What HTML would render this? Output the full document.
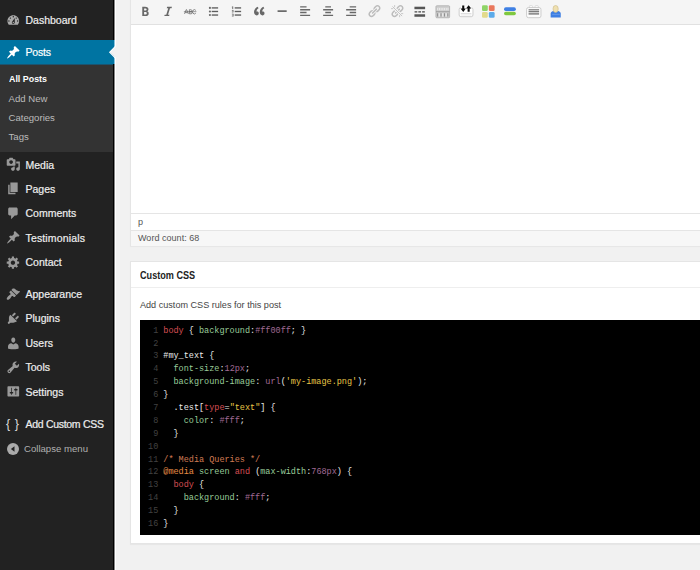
<!DOCTYPE html>
<html>
<head>
<meta charset="utf-8">
<title>Edit Post</title>
<style>
*{box-sizing:border-box;margin:0;padding:0}
html,body{width:700px;height:570px;overflow:hidden;background:#f1f1f1;font-family:"Liberation Sans",sans-serif;}
#wrap{position:relative;width:700px;height:570px;overflow:hidden}
/* sidebar */
#side{position:absolute;left:0;top:0;width:114px;height:570px;background:linear-gradient(to right,#222 0,#222 113px,#000 113px,#000 114px)}
#edge{position:absolute;left:114px;top:0;width:2px;height:570px;background:linear-gradient(to right,#858585 0,#858585 1px,#fff 1px,#fff 2px)}
#edge2{position:absolute;left:113px;top:40px;width:2px;height:24px;background:linear-gradient(to right,#0074a2 0,#0074a2 1px,#86c2dc 1px,#86c2dc 2px)}
.mi{position:absolute;left:0;width:114px;height:24px}
.mi svg{position:absolute;left:5.7px;top:4.7px;width:14.6px;height:14.6px;fill:#999}
.mi span{position:absolute;left:25.5px;top:0;line-height:24px;font-size:10.5px;color:#eee;white-space:nowrap;-webkit-text-stroke:0.2px #eee}
.mi.cur{background:#0074a2}
.mi.cur svg{fill:#fff}
.mi.cur span{color:#fff;-webkit-text-stroke:0.2px #fff}
#sub{position:absolute;left:0;top:64px;width:113px;height:88px;background:#333;border-top:1px solid #1a5470}
#sub span{position:absolute;left:8.5px;font-size:9.6px;color:#bbb;line-height:12px;white-space:nowrap}
#sub span.b{color:#fff;font-weight:bold}
/* editor */
#ed{position:absolute;left:130px;top:-1px;width:600px;height:247px;background:#fff;border:1px solid #e5e5e5;box-shadow:0 1px 1px rgba(0,0,0,.04)}
#tb{position:absolute;left:0;top:0;width:100%;height:25px;background:#f5f5f5;border-bottom:1px solid #e1e1e1}
#tb svg{position:absolute}
#path{position:absolute;left:0;top:213px;width:100%;height:18px;border-top:1px solid #e5e5e5;background:#fff;font-size:9px;color:#555;line-height:17px;padding-left:7px}
#wc{position:absolute;left:0;top:230px;width:100%;height:16px;border-top:1px solid #e5e5e5;background:#f7f7f7;font-size:9px;color:#555;line-height:15.4px;padding-left:7px;letter-spacing:0.03px}
/* postbox */
#pb{position:absolute;left:130px;top:261px;width:600px;height:283px;background:#fff;border:1px solid #e5e5e5;box-shadow:0 1px 1px rgba(0,0,0,.04)}
#pb h3{position:absolute;left:0;top:0;width:100%;height:26px;border-bottom:1px solid #eee;font-size:10px;font-weight:bold;color:#222;line-height:28px;padding-left:8.5px}
#pb h3 span{display:inline-block;transform:scaleX(0.91);transform-origin:0 50%}
#desc{position:absolute;left:9px;top:36.5px;font-size:9.1px;color:#444;line-height:12px;white-space:nowrap}
#cm{position:absolute;left:9px;top:58px;width:600px;height:215px;background:#000;font-family:"Liberation Mono",monospace;font-size:8.5px;color:#eaeaea}
#cm div{position:absolute;left:0;height:12.88px;line-height:12.88px;white-space:pre}
#cm div i{position:absolute;left:0;width:18.3px;text-align:right;font-style:normal;color:#424242}
#cm div b{position:absolute;left:23.3px;font-weight:normal}
.t{color:#d54e53}.p{color:#99cc99}.a{color:#a16a94}.s{color:#e7c547}.c{color:#d27b53}.d{color:#e78c45}.k{color:#d54e53}
</style>
</head>
<body>
<div id="wrap">
<div id="side">
  <div class="mi" style="top:8px"><svg viewBox="0 0 20 20" style="fill:#aaa"><path d="M3.76 16h12.48c1.1-1.37 1.76-3.11 1.76-5 0-4.42-3.58-8-8-8s-8 3.58-8 8c0 1.89.66 3.63 1.76 5zM10 4c.55 0 1 .45 1 1s-.45 1-1 1-1-.45-1-1 .45-1 1-1zM6 6c.55 0 1 .45 1 1s-.45 1-1 1-1-.45-1-1 .45-1 1-1zm8 0c.55 0 1 .45 1 1s-.45 1-1 1-1-.45-1-1 .45-1 1-1zm-5.37 5.55L12 7v6c0 1.1-.9 2-2 2s-2-.9-2-2c0-.57.24-1.08.63-1.45zM4 10c.55 0 1 .45 1 1s-.45 1-1 1-1-.45-1-1 .45-1 1-1zm12 0c.55 0 1 .45 1 1s-.45 1-1 1-1-.45-1-1 .45-1 1-1zm-5 3c0-.55-.45-1-1-1s-1 .45-1 1 .45 1 1 1 1-.45 1-1z"/></svg><span>Dashboard</span></div>
  <div class="mi cur" style="top:40px"><svg viewBox="0 0 20 20"><path d="M10.44 3.02l1.82-1.82 6.36 6.35-1.83 1.82c-1.05-.68-2.48-.57-3.41.36l-.75.75c-.92.93-1.04 2.35-.35 3.41l-1.83 1.82-2.41-2.41-2.8 2.79c-.42.42-3.38 2.71-3.8 2.29s1.86-3.39 2.28-3.81l2.79-2.79L4.1 9.36l1.83-1.82c1.05.69 2.48.57 3.4-.36l.75-.75c.93-.92 1.05-2.35.36-3.41z"/></svg><span style="letter-spacing:-0.2px">Posts</span></div>
  <div id="sub">
    <span class="b" style="top:8.4px;transform:scaleX(0.925);transform-origin:0 0">All Posts</span>
    <span style="top:27.6px">Add New</span>
    <span style="top:46.6px">Categories</span>
    <span style="top:66px">Tags</span>
  </div>
  <div class="mi" style="top:152.6px"><svg viewBox="0 0 20 20"><path d="M13 11V4c0-.55-.45-1-1-1h-1.670L9 1H5L3.670 3H2c-.55 0-1 .45-1 1v7c0 .55.45 1 1 1h10c.55 0 1-.45 1-1zM7 4.500c1.380 0 2.500 1.120 2.500 2.500S8.380 9.500 7 9.500 4.500 8.380 4.500 7 5.620 4.500 7 4.500zM14 6h5v10.500c0 1.380-1.120 2.500-2.500 2.500S14 17.880 14 16.500s1.120-2.500 2.500-2.500c.17 0 .34.02.5.05V9h-3V6zm-4 8.050V13h2v3.500c0 1.380-1.120 2.500-2.500 2.500S7 17.880 7 16.500 8.120 14 9.500 14c.17 0 .34.02.5.05z"/></svg><span>Media</span></div>
  <div class="mi" style="top:176.5px"><svg viewBox="0 0 20 20"><path d="M6 15V2h10v13H6zm-1 1h8v2H3V5h2v11z"/></svg><span>Pages</span></div>
  <div class="mi" style="top:201px"><svg viewBox="0 0 20 20"><path d="M5 2h9c1.100 0 2 .9 2 2v7c0 1.100-.9 2-2 2h-2l-5 5v-5H5c-1.100 0-2-.9-2-2V4c0-1.100.9-2 2-2z"/></svg><span>Comments</span></div>
  <div class="mi" style="top:225.5px"><svg viewBox="0 0 20 20"><path d="M10.44 3.02l1.82-1.82 6.36 6.35-1.83 1.82c-1.05-.68-2.48-.57-3.41.36l-.75.75c-.92.93-1.04 2.35-.35 3.41l-1.83 1.82-2.41-2.41-2.8 2.79c-.42.42-3.38 2.71-3.8 2.29s1.86-3.39 2.28-3.81l2.79-2.79L4.1 9.36l1.83-1.82c1.05.69 2.48.57 3.4-.36l.75-.75c.93-.92 1.05-2.35.36-3.41z"/></svg><span style="letter-spacing:0.15px">Testimonials</span></div>
  <div class="mi" style="top:250px"><svg viewBox="0 0 20 20"><path d="M18 12h-2.180c-.17.7-.44 1.350-.81 1.930l1.540 1.540-2.100 2.100-1.540-1.540c-.58.36-1.230.63-1.910.79V19H8v-2.180c-.68-.16-1.330-.43-1.910-.79l-1.540 1.540-2.120-2.120 1.540-1.540c-.36-.58-.63-1.230-.79-1.910H1V9.030h2.170c.16-.7.44-1.350.8-1.940L2.430 5.550l2.100-2.100 1.540 1.540c.58-.37 1.240-.64 1.930-.81V2h3v2.180c.68.16 1.330.43 1.910.79l1.540-1.540 2.120 2.120-1.540 1.540c.36.59.64 1.240.8 1.940H18V12zm-8.500 1.500c1.660 0 3-1.340 3-3s-1.340-3-3-3-3 1.340-3 3 1.340 3 3 3z"/></svg><span>Contact</span></div>
  <div class="mi" style="top:282px"><svg viewBox="0 0 20 20"><path d="M14.480 11.060L7.410 3.990l1.500-1.500c.5-.56 2.300-.47 3.510.32 1.210.8 1.430 1.280 2.910 2.100 1.180.64 2.450 1.260 4.450.85zm-.71.71L6.700 4.700 4.930 6.470c-.39.39-.39 1.020 0 1.410l1.060 1.060c.39.39.39 1.030 0 1.420-.6.6-1.430 1.110-2.210 1.690-.35.26-.7.53-1.010.84C1.430 14.230.4 16.080 1.400 17.070c.99 1 2.840-.03 4.180-1.360.31-.31.58-.66.85-1.020.57-.78 1.080-1.610 1.690-2.210.39-.39 1.020-.39 1.410 0l1.060 1.060c.39.39 1.020.39 1.410 0z"/></svg><span>Appearance</span></div>
  <div class="mi" style="top:306px"><svg viewBox="0 0 20 20"><path d="M13.110 4.360L9.870 7.600 8 5.730l3.240-3.240c.35-.34 1.050-.2 1.560.32.52.51.66 1.210.31 1.550zm-8 1.770l.91-1.120 9.010 9.010-1.190.84c-.71.71-2.630 1.160-3.820 1.160H6.140L4.900 17.260c-.59.59-1.540.59-2.120 0-.59-.58-.59-1.530 0-2.120l1.240-1.240v-3.880c0-1.130.4-3.190 1.090-3.890zm7.260 3.970l3.240-3.240c.34-.35 1.040-.21 1.550.31.52.51.66 1.210.31 1.550l-3.240 3.250z"/></svg><span>Plugins</span></div>
  <div class="mi" style="top:331px"><svg viewBox="0 0 20 20"><path d="M10 9.250c-2.270 0-2.730-3.440-2.730-3.440C7 4.020 7.820 2 9.970 2c2.160 0 2.980 2.020 2.710 3.810 0 0-.41 3.440-2.680 3.440zm0 2.570L12.720 10c2.390 0 4.520 2.330 4.520 4.530v2.490s-3.650 1.130-7.240 1.130c-3.650 0-7.240-1.130-7.240-1.130v-2.490c0-2.250 1.940-4.480 4.470-4.480z"/></svg><span>Users</span></div>
  <div class="mi" style="top:355px"><svg viewBox="0 0 20 20"><path d="M16.680 9.770c-1.340 1.340-3.300 1.670-4.950.99l-5.410 6.520c-.99.99-2.590.99-3.580 0s-.99-2.590 0-3.570l6.520-5.420c-.68-1.650-.35-3.610.99-4.950 1.280-1.280 3.120-1.620 4.720-1.060l-2.890 2.890 2.820 2.820 2.860-2.870c.53 1.580.18 3.390-1.080 4.650zM3.810 16.210c.4.39 1.040.39 1.430 0 .4-.4.4-1.040 0-1.430-.39-.4-1.030-.4-1.430 0-.39.39-.39 1.030 0 1.430z"/></svg><span>Tools</span></div>
  <div class="mi" style="top:379.5px"><svg viewBox="0 0 20 20"><path d="M18 16V4c0-.55-.45-1-1-1H3c-.55 0-1 .45-1 1v12c0 .55.45 1 1 1h14c.55 0 1-.45 1-1zM8 11h1c.55 0 1 .45 1 1s-.45 1-1 1H8v1.500c0 .28-.22.5-.5.5s-.5-.22-.5-.5V13H6c-.55 0-1-.45-1-1s.45-1 1-1h1V5.500c0-.28.22-.5.5-.5s.5.22.5.5V11zm5-2h-1c-.55 0-1-.45-1-1s.45-1 1-1h1V5.500c0-.28.22-.5.5-.5s.5.22.5.5V7h1c.55 0 1 .45 1 1s-.45 1-1 1h-1v5.500c0 .28-.22.5-.5.5s-.5-.22-.5-.5V9z"/></svg><span>Settings</span></div>
  <div class="mi" style="top:411.8px"><span style="left:6px;font-size:12.5px;color:#ddd;letter-spacing:0.5px;-webkit-text-stroke:0">{ }</span><span style="letter-spacing:-0.3px">Add Custom CSS</span></div>
  <div class="mi" style="top:436.7px"><svg viewBox="0 0 20 20" style="left:7px;top:6px;width:12px;height:12px"><circle cx="10" cy="10" r="10" fill="#aaa"/><path d="M12.500 5.500v9L6.500 10z" fill="#222"/></svg><span style="left:24px;font-size:9.6px;color:#b0b0b0;-webkit-text-stroke:0">Collapse menu</span></div>
</div>
<div id="edge"></div><div id="edge2"></div>
<svg style="position:absolute;left:107.7px;top:45px;width:9px;height:15px" viewBox="0 0 9 15"><path d="M8 1.300L1.900 7.300 8 13.100z" fill="#f1f1f1"/><path d="M7.400 1.300L1.700 7.300l5.700 5.800" fill="none" stroke="#fff" stroke-width="1.1"/></svg>

<div id="ed">
  <div id="tb">
<svg viewBox="0 0 20 20" style="left:6.87px;top:3.75px;width:14.25px;height:14.25px" ><path fill="#686868" d="M6 4v13h4.54c1.37 0 2.46-.33 3.26-1 .8-.66 1.2-1.58 1.2-2.77 0-.84-.17-1.51-.51-2.01s-.9-.85-1.67-1.03v-.09c.57-.1 1.02-.4 1.36-.9s.51-1.13.51-1.91c0-1.14-.39-1.98-1.17-2.5C12.75 4.26 11.5 4 9.78 4H6zm2.57 5.15V6.260h1.36c.73 0 1.27.11 1.61.32.34.22.51.58.51 1.07 0 .54-.16.92-.47 1.15s-.82.35-1.51.35h-1.5zm0 2.190h1.6c1.44 0 2.16.53 2.16 1.610 0 .6-.17 1.050-.51 1.340s-.86.43-1.57.43H8.570v-3.380z"/></svg>
<svg viewBox="0 0 20 20" style="left:29.62px;top:3.75px;width:14.25px;height:14.25px" ><path fill="#686868" d="M14.78 6h-2.13l-2.8 9h2.12l-.62 2H4.6l.62-2h2.14l2.8-9H8.030l.62-2h6.75z"/></svg>
<svg viewBox="0 0 20 20" style="left:52.17px;top:3.75px;width:14.25px;height:14.25px" ><g fill="none" stroke="#686868" stroke-width="1.150" stroke-linejoin="round" transform="translate(0 2.140) scale(1 0.88)"><path d="M2.100 13.300L4.500 6.600h.6L7.500 13.300M3.100 11.300h3.400"/><path d="M8.900 6.700v6.500h2.300a1.650 1.650 0 0 0 0-3.300H8.900M8.900 9.900h2a1.600 1.600 0 0 0 0-3.200h-2"/><path d="M18 7.800a2.700 3.300 0 1 0 0 4.400"/></g><rect x="1.200" y="10.450" width="17.600" height="0.9" fill="#686868"/></svg>
<svg viewBox="0 0 20 20" style="left:75.12px;top:3.75px;width:14.25px;height:14.25px" ><g fill="#686868"><circle cx="5.5" cy="5.5" r="1.5"/><circle cx="5.5" cy="10.5" r="1.5"/><circle cx="5.5" cy="15.5" r="1.5"/><rect x="8" y="4.55" width="9" height="1.9" fill="#5e5e5e"/><rect x="8" y="9.55" width="9" height="1.9" fill="#5e5e5e"/><rect x="8" y="14.55" width="9" height="1.9" fill="#5e5e5e"/></g></svg>
<svg viewBox="0 0 20 20" style="left:98.07px;top:3.75px;width:14.25px;height:14.25px" ><g fill="#686868"><rect x="4.6" y="3.4" width="1.3" height="3.8"/><rect x="4" y="3.8" width="1" height="1"/><rect x="4" y="8.6" width="2.2" height="1"/><rect x="5.2" y="9" width="1.1" height="1.8"/><rect x="4" y="10.6" width="2.3" height="1.2"/><rect x="4" y="13.6" width="2.3" height="1"/><rect x="5.2" y="14" width="1.1" height="3.2"/><rect x="4" y="16.4" width="2.3" height="1"/><rect x="8" y="4.55" width="9" height="1.9" fill="#5e5e5e"/><rect x="8" y="9.55" width="9" height="1.9" fill="#5e5e5e"/><rect x="8" y="14.55" width="9" height="1.9" fill="#5e5e5e"/></g></svg>
<svg viewBox="0 0 20 20" style="left:121.02px;top:3.75px;width:14.25px;height:14.25px" ><path fill="#686868" d="M9.49 13.22c0-.74-.2-1.38-.61-1.9-.62-.78-1.83-.88-2.53-.72-.29-1.65 1.11-3.75 2.92-4.65L7.880 4c-2.73 1.3-5.42 4.28-4.96 8.05C3.210 14.43 4.590 16 6.540 16c.85 0 1.56-.25 2.12-.75s.83-1.18.83-2.030zm8.05 0c0-.74-.2-1.38-.61-1.9-.63-.78-1.83-.88-2.53-.72-.29-1.65 1.11-3.75 2.920-4.650L15.930 4c-2.73 1.3-5.410 4.28-4.950 8.050.29 2.380 1.660 3.950 3.610 3.950.85 0 1.560-.25 2.120-.75s.83-1.180.83-2.030z"/></svg>
<svg viewBox="0 0 20 20" style="left:143.97px;top:3.75px;width:14.25px;height:14.25px" ><rect x="3.6" y="8.8" width="12.8" height="2.4" fill="#686868"/></svg>
<svg viewBox="0 0 20 20" style="left:166.92px;top:3.75px;width:14.25px;height:14.25px" ><path fill="#686868" d="M12 5V3H3v2h9zm5 4V7H3v2h14zm-5 4v-2H3v2h9zm5 4v-2H3v2h14z"/></svg>
<svg viewBox="0 0 20 20" style="left:189.87px;top:3.75px;width:14.25px;height:14.25px" ><path fill="#686868" d="M14 5V3H6v2h8zm3 4V7H3v2h14zm-3 4v-2H6v2h8zm3 4v-2H3v2h14z"/></svg>
<svg viewBox="0 0 20 20" style="left:212.82px;top:3.75px;width:14.25px;height:14.25px" ><path fill="#686868" d="M17 5V3H8v2h9zm0 4V7H3v2h14zm0 4v-2H8v2h9zm0 4v-2H3v2h14z"/></svg>
<svg viewBox="0 0 20 20" style="left:235.77px;top:3.75px;width:14.25px;height:14.25px" ><path fill="#bcbcbc" d="M17.74 2.76c1.68 1.69 1.68 4.41 0 6.1l-1.53 1.52c-1.12 1.12-2.7 1.47-4.14 1.09l2.62-2.61.76-.77.76-.76c.84-.84.84-2.2 0-3.04-.84-.85-2.2-.85-3.040 0l-.77.76-3.380 3.380c-.37-1.44-.02-3.020 1.100-4.140l1.520-1.530c1.690-1.680 4.420-1.680 6.100 0zM8.590 13.430l5.340-5.340c.42-.42.42-1.100 0-1.520-.44-.43-1.130-.39-1.530 0l-5.330 5.340c-.42.42-.42 1.100 0 1.520.44.43 1.130.39 1.520 0zm-.76 2.290l4.140-4.150c.38 1.440.03 3.020-1.090 4.140l-1.520 1.530c-1.690 1.680-4.410 1.680-6.100 0-1.680-1.680-1.680-4.420 0-6.100l1.530-1.520c1.120-1.120 2.700-1.470 4.140-1.100l-4.140 4.150c-.85.84-.85 2.200 0 3.050.84.84 2.200.84 3.040 0z"/></svg>
<svg viewBox="0 0 20 20" style="left:258.72px;top:3.75px;width:14.25px;height:14.25px" ><path fill="#bcbcbc" d="M17.74 2.76c1.68 1.69 1.68 4.41 0 6.1l-1.53 1.52c-1.12 1.12-2.7 1.47-4.14 1.09l2.62-2.61.76-.77.76-.76c.84-.84.84-2.2 0-3.04-.84-.85-2.2-.85-3.040 0l-.77.76-3.380 3.380c-.37-1.44-.02-3.020 1.100-4.140l1.520-1.530c1.690-1.680 4.420-1.680 6.100 0zM8.590 13.430l5.340-5.340c.42-.42.42-1.100 0-1.520-.44-.43-1.130-.39-1.530 0l-5.330 5.340c-.42.42-.42 1.100 0 1.520.44.43 1.130.39 1.520 0zm-.76 2.290l4.140-4.150c.38 1.440.03 3.020-1.090 4.140l-1.520 1.530c-1.690 1.680-4.410 1.680-6.100 0-1.680-1.680-1.680-4.420 0-6.100l1.530-1.520c1.120-1.120 2.700-1.470 4.140-1.100l-4.140 4.150c-.85.84-.85 2.200 0 3.050.84.84 2.200.84 3.040 0z"/><path d="M3 3L17.500 17.500" stroke="#f5f5f5" stroke-width="3.400"/><path d="M3.500 3.500L17 17" stroke="#bcbcbc" stroke-width="1.200"/><path d="M6.500 1.500v3M1.500 6.500h3M13.500 18.500v-3M18.500 13.500h-3" stroke="#bcbcbc" stroke-width="1.100"/></svg>
<svg viewBox="0 0 20 20" style="left:281.67px;top:4.50px;width:14.25px;height:14.25px" ><rect x="2" y="2.400" width="15" height="3.500" fill="#555"/><rect x="2" y="13" width="15" height="3.500" fill="#555"/><path d="M2.200 9.700h15" stroke="#484848" stroke-width="1.800" stroke-dasharray="3.800 1.500"/></svg>
<svg viewBox="0 0 20 20" style="left:304.62px;top:4.50px;width:14.25px;height:14.25px" overflow="visible"><rect x="-0.100" y="1.100" width="19.200" height="16.800" rx="1.200" fill="#cfcfcf" stroke="#a6a6a6" stroke-width="1"/><rect x="0" y="9" width="19" height="1.100" fill="#8f8f8f"/><rect x="1.8" y="4.200" width="1.200" height="3" fill="#eeeeee"/><rect x="4.2" y="4.200" width="1.200" height="3" fill="#eeeeee"/><rect x="6.6" y="4.200" width="1.200" height="3" fill="#eeeeee"/><rect x="9.0" y="4.200" width="1.200" height="3" fill="#eeeeee"/><rect x="11.4" y="4.200" width="1.200" height="3" fill="#eeeeee"/><rect x="13.8" y="4.200" width="1.200" height="3" fill="#eeeeee"/><rect x="16.2" y="4.200" width="1.200" height="3" fill="#eeeeee"/><rect x="1.6" y="11.600" width="1.300" height="4.600" fill="#888"/><rect x="4.0" y="11.600" width="1.300" height="4.600" fill="#f0f0f0"/><rect x="6.4" y="11.600" width="1.300" height="4.600" fill="#888"/><rect x="8.8" y="11.600" width="1.300" height="4.600" fill="#f0f0f0"/><rect x="11.2" y="11.600" width="1.300" height="4.600" fill="#888"/><rect x="13.6" y="11.600" width="1.300" height="4.600" fill="#f0f0f0"/><rect x="16.0" y="11.600" width="1.300" height="4.600" fill="#888"/></svg>
<svg viewBox="0 0 20 20" style="left:327.57px;top:4.50px;width:14.25px;height:14.25px" overflow="visible"><rect x="0.200" y="3.800" width="19.400" height="12.600" rx="2.400" fill="#fff" stroke="#c4c4c4" stroke-width="1.200"/><rect x="2.400" y="11.800" width="15" height="1" fill="#c9c9c9"/><rect x="2.400" y="12.800" width="15" height="2.200" fill="#f1f1f1"/><rect x="2.600" y="2" width="14.800" height="8" fill="#fff"/><path fill="#0a0a0a" d="M4.500 0.600h2.900v4.400h2.300L5.950 9.700 2.200 5h2.300z"/><path fill="#0a0a0a" d="M13.500 0.300l3.800 4.700h-2.300v4.600h-2.900V5h-2.300z"/></svg>
<svg viewBox="0 0 20 20" style="left:350.52px;top:4.50px;width:14.25px;height:14.25px" ><rect x="0" y="0.300" width="8.100" height="8.100" rx="1.800" fill="#8ed466"/><rect x="9.600" y="0.300" width="8.100" height="8.100" rx="1.800" fill="#e9775c"/><rect x="0" y="9.900" width="8.100" height="8.100" rx="1.800" fill="#e2da8c"/><rect x="9.600" y="9.900" width="8.100" height="8.100" rx="1.800" fill="#5cabea"/></svg>
<svg viewBox="0 0 20 20" style="left:373.47px;top:4.50px;width:14.25px;height:14.25px" ><rect x="0" y="3.300" width="16.700" height="5" rx="2.500" fill="#3f80e4"/><rect x="0" y="9.500" width="16.700" height="5" rx="2.500" fill="#7fc83f"/></svg>
<svg viewBox="0 0 20 20" style="left:396.42px;top:4.50px;width:14.25px;height:14.25px" overflow="visible"><rect x="3.200" y="0.900" width="4.600" height="4" rx="1" fill="#fdfdfd" stroke="#cfcfcf" stroke-width="0.900"/><rect x="11.300" y="0.900" width="4.600" height="4" rx="1" fill="#fdfdfd" stroke="#cfcfcf" stroke-width="0.900"/><rect x="-0.600" y="3.600" width="20.200" height="14.200" rx="2.600" fill="#fcfcfc" stroke="#c6c6c6" stroke-width="1.200"/><rect x="2.200" y="5.900" width="14.800" height="1.700" fill="#7c7c7c"/><rect x="2.200" y="8.400" width="14.800" height="1.900" fill="#7c7c7c"/><rect x="2.200" y="11.300" width="14.800" height="2.300" fill="#8c8c8c"/></svg>
<svg viewBox="0 0 20 20" style="left:419.37px;top:4.50px;width:14.25px;height:14.25px" ><path d="M0.900 17.400v-5.200c0-1.600 1.400-3.400 3.400-3.800h7.400c2 .4 3.400 2.200 3.400 3.800v5.200z" fill="#3f7fe2"/><path d="M3 13.200h10.800" stroke="#73a3ee" stroke-width="0.900"/><ellipse cx="7.900" cy="5.500" rx="3.700" ry="4.900" fill="#efe0b0" stroke="#c9b683" stroke-width="0.800"/></svg>
</div>
  <div id="path">p</div>
  <div id="wc">Word count: 68</div>
</div>

<div id="pb">
  <h3><span>Custom CSS</span></h3>
  <div id="desc">Add custom CSS rules for this post</div>
  <div id="cm">
<div style="top:4.70px"><i>1</i><b><span class="t">body</span> { <span class="p">background</span>:<span class="a">#ff00ff</span>; }</b></div>
<div style="top:17.58px"><i>2</i><b></b></div>
<div style="top:30.46px"><i>3</i><b>#my_text {</b></div>
<div style="top:43.34px"><i>4</i><b>  <span class="p">font-size</span>:<span class="a">12px</span>;</b></div>
<div style="top:56.22px"><i>5</i><b>  <span class="p">background-image</span>: <span class="a">url</span>(<span class="s">'my-image.png'</span>);</b></div>
<div style="top:69.10px"><i>6</i><b>}</b></div>
<div style="top:81.98px"><i>7</i><b>  .test[<span class="t">type</span>=<span class="s">"text"</span>] {</b></div>
<div style="top:94.86px"><i>8</i><b>    <span class="p">color</span>: <span class="a">#fff</span>;</b></div>
<div style="top:107.74px"><i>9</i><b>  }</b></div>
<div style="top:120.62px"><i>10</i><b></b></div>
<div style="top:133.50px"><i>11</i><b><span class="c">/* Media Queries */</span></b></div>
<div style="top:146.38px"><i>12</i><b><span class="d">@media</span> <span class="p">screen</span> <span class="k">and</span> (<span class="p">max-width</span>:<span class="a">768px</span>) {</b></div>
<div style="top:159.26px"><i>13</i><b>  <span class="t">body</span> {</b></div>
<div style="top:172.14px"><i>14</i><b>    <span class="p">background</span>: <span class="a">#fff</span>;</b></div>
<div style="top:185.02px"><i>15</i><b>  }</b></div>
<div style="top:197.90px"><i>16</i><b>}</b></div>
  </div>
</div>
</div>
</body>
</html>
